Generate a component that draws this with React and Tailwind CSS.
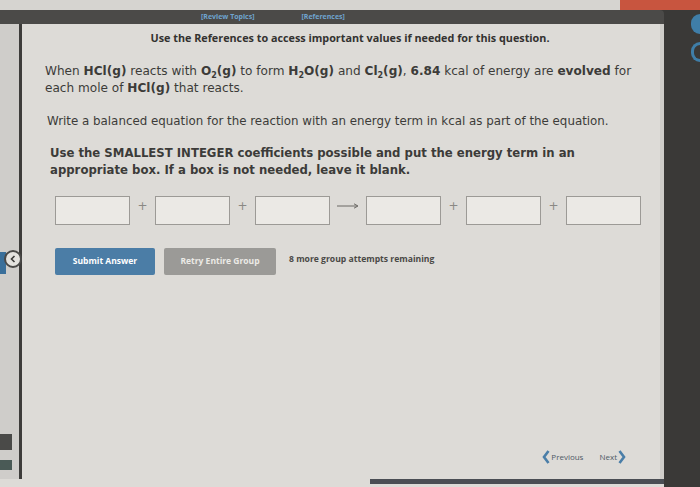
import React from 'react';

function Box() {
  return <div className="w-[75px] h-[29px] bg-[#ebe9e5] border border-[#9c9a96]" />;
}

function Plus() {
  return <span className="text-[12px] text-[#8a8884] w-[25px] text-center -mt-2">+</span>;
}

function Sub({ children }) {
  return <span className="align-[-3px] text-[8px] leading-none">{children}</span>;
}

export default function App() {
  return (
    <div className="relative w-[700px] h-[487px] bg-[#3a3937] flex flex-col overflow-hidden" style={{ fontFamily: '"Open Sans", "Liberation Sans", sans-serif' }}>
      {/* top strip */}
      <div className="h-[10px] flex">
        <div className="flex-1 bg-[#d6d4d0]" />
        <div className="w-[80px] bg-[#c8553f]" />
      </div>

      <div className="flex flex-1 min-h-0">
        <div className="w-[664px] flex flex-col">
          {/* header bar */}
          <div className="h-[14px] bg-[#4b4a48] rounded-tr-[4px] flex items-center text-[7px] font-bold text-[#6fa4cf]">
            <span className="ml-[201px]">[Review Topics]</span>
            <span className="ml-[47px]">[References]</span>
          </div>

          <div className="flex flex-1 min-h-0">
            {/* left sidebar */}
            <div className="w-[22px] bg-[#cfcdca] border-r-[3px] border-[#3d3c3a] flex flex-col">
              <div className="mt-[228px] h-[22px] w-[6px] bg-[#3a6f9a]" />
              <div className="mt-[160px] h-[16px] w-[12px] bg-[#4a4a48]" />
              <div className="mt-[10px] h-[10px] w-[12px] bg-[#4a5a56]" />
            </div>

            {/* main */}
            <div className="flex-1 bg-[#dddbd7] border-r-[4px] border-[#cfcdc9] flex flex-col text-[#3c3b39]" style={{ fontFamily: '"DejaVu Sans", "Open Sans", sans-serif' }}>
              <p className="text-center text-[10.8px] font-bold mt-[6px] pl-[18px] text-[#333230]" style={{ fontFamily: '"Open Sans", sans-serif' }}>
                Use the References to access important values if needed for this question.
              </p>

              <p className="ml-[23px] mt-[17px] text-[12.1px] leading-[17px] w-[598px]">
                When <b>HCl(g)</b> reacts with <b>O<Sub>2</Sub>(g)</b> to form <b>H<Sub>2</Sub>O(g)</b> and <b>Cl<Sub>2</Sub>(g)</b>, <b>6.84</b> kcal of energy are <b>evolved</b> for each mole of <b>HCl(g)</b> that reacts.
              </p>

              <p className="ml-[25px] mt-[16px] text-[11.85px]">
                Write a balanced equation for the reaction with an energy term in kcal as part of the equation.
              </p>

              <p className="ml-[28px] mt-[14px] text-[11.7px] font-bold leading-[17px] w-[560px]">
                Use the SMALLEST INTEGER coefficients possible and put the energy term in an appropriate box. If a box is not needed, leave it blank.
              </p>

              <div className="flex items-center ml-[33px] mt-[17px]">
                <Box />
                <Plus />
                <Box />
                <Plus />
                <Box />
                <span className="w-[36px] flex justify-center -mt-2">
                  <svg width="22" height="6" viewBox="0 0 22 6"><path d="M0 3H20M17 0.8L21 3L17 5.2" stroke="#6a6864" strokeWidth="1" fill="none" /></svg>
                </span>
                <Box />
                <Plus />
                <Box />
                <Plus />
                <Box />
              </div>

              <div className="flex items-center ml-[33px] mt-[23px] gap-[9px]" style={{ fontFamily: '"Open Sans", sans-serif' }}>
                <div className="w-[100px] h-[27px] bg-[#4b7da6] rounded-[2px] flex items-center justify-center text-[8.5px] font-bold text-white">Submit Answer</div>
                <div className="w-[112px] h-[27px] bg-[#9b9a97] rounded-[2px] flex items-center justify-center text-[8.5px] font-bold text-[#eceae6]">Retry Entire Group</div>
                <span className="ml-[4px] text-[8.6px] font-bold text-[#4a4946] -mt-1">8 more group attempts remaining</span>
              </div>

              <div className="flex-1" />

              <div className="flex items-center justify-end mr-[34px] mb-[15px] gap-[16px] text-[8px] text-[#4e5a66]" style={{ fontFamily: '"Open Sans", sans-serif' }}>
                <span className="flex items-center gap-[1px]">
                  <svg width="8" height="14" viewBox="0 0 8 14"><path d="M6.5 1L2 7L6.5 13" stroke="#4a7ea8" strokeWidth="2.6" fill="none" /></svg>
                  Previous
                </span>
                <span className="flex items-center gap-[1px]">
                  Next
                  <svg width="8" height="14" viewBox="0 0 8 14"><path d="M1.5 1L6 7L1.5 13" stroke="#4a7ea8" strokeWidth="2.6" fill="none" /></svg>
                </span>
              </div>
            </div>
          </div>

          <div className="h-[8px] bg-[#dddbd7] flex">
            <div className="ml-[370px] flex-1 bg-[#4a4e54] h-[5px]" />
          </div>
        </div>

        {/* right dark area */}
        <div className="flex-1 flex flex-col items-end pt-[4px] gap-[8px]">
          <div className="w-[9px] h-[20px] bg-[#3f7ea8] rounded-l-full" />
          <div className="w-[9px] h-[20px] border-[3px] border-r-0 border-[#3f7ea8] rounded-l-full" />
        </div>
      </div>

      {/* collapse toggle */}
      <div className="absolute left-[4px] top-[250px] w-[18px] h-[18px] rounded-full bg-[#e4e2de] border-[2px] border-[#4a4947] flex items-center justify-center">
        <svg width="8" height="8" viewBox="0 0 8 8"><path d="M5.5 1L2.5 4L5.5 7" stroke="#3a3937" strokeWidth="1.6" fill="none" /></svg>
      </div>
    </div>
  );
}
